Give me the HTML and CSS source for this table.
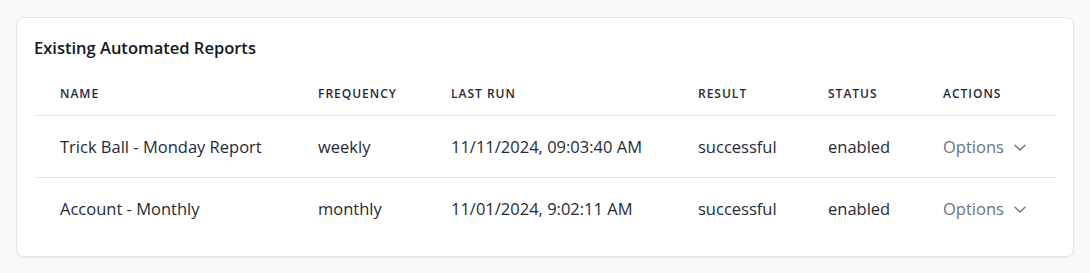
FILE: index.html
```html
<!DOCTYPE html>
<html lang="en">
<head>
<meta charset="UTF-8">
<meta name="viewport" content="width=device-width, initial-scale=1.0">
<title>Automated Reports</title>
<link rel="stylesheet" href="styles.css">
</head>
<body>

<div class="card">
  <h3 class="card-title">Existing Automated Reports</h3>

  <table class="reports">
    <thead>
      <tr>
        <th class="col-name">Name</th>
        <th class="col-freq">Frequency</th>
        <th class="col-run">Last Run</th>
        <th class="col-result">Result</th>
        <th class="col-status">Status</th>
        <th>Actions</th>
      </tr>
    </thead>
    <tbody>
      <tr>
        <td>Trick Ball - Monday Report</td>
        <td>weekly</td>
        <td>11/11/2024, 09:03:40 AM</td>
        <td>successful</td>
        <td>enabled</td>
        <td>
          <button class="options">Options
            <svg class="chevron" viewBox="0 0 16 16" width="16" height="16"><path d="M3 6.2 8 11l5-4.8" fill="none" stroke="currentColor" stroke-width="1.4" stroke-linecap="round" stroke-linejoin="round"/></svg>
          </button>
        </td>
      </tr>
      <tr>
        <td>Account - Monthly</td>
        <td>monthly</td>
        <td>11/01/2024, 9:02:11 AM</td>
        <td>successful</td>
        <td>enabled</td>
        <td>
          <button class="options">Options
            <svg class="chevron" viewBox="0 0 16 16" width="16" height="16"><path d="M3 6.2 8 11l5-4.8" fill="none" stroke="currentColor" stroke-width="1.4" stroke-linecap="round" stroke-linejoin="round"/></svg>
          </button>
        </td>
      </tr>
    </tbody>
  </table>
</div>

</body>
</html>
```

FILE: styles.css
```css
body {
    margin: 0;
    padding: 17px 16px;
    background-color: #f8f9fb;
    font-family: "Open Sans", "Noto Sans", sans-serif;
    color: #1f2937;
}
.card {
    background: #fff;
    border: 1px solid #e3e5e8;
    border-radius: 8px;
    box-shadow: 0 1px 2px rgba(0, 0, 0, 0.06);
    padding: 18px 17px 17px;
}
.card-title {
    margin: 0 0 13px;
    font-size: 16.5px;
    line-height: 24px;
    font-weight: 600;
    color: #111827;
}
.reports {
    width: 100%;
    border-collapse: collapse;
    table-layout: fixed;
}
.reports th,
.reports td {
    box-sizing: border-box;
}
.reports th {
    text-align: left;
    font-size: 12px;
    font-weight: 600;
    letter-spacing: 1px;
    text-transform: uppercase;
    line-height: 18px;
    padding: 12px 26px;
    border-bottom: 1px solid #e5e7eb;
    color: #1f2937;
}
.col-name { width: 258px; }
.col-freq { width: 133px; }
.col-run { width: 247px; }
.col-result { width: 130px; }
.col-status { width: 115px; }
.reports td {
    font-size: 16.5px;
    line-height: 21px;
    padding: 20px 26px 20px;
    color: #1f2937;
    white-space: nowrap;
}
.reports tbody tr + tr td {
    border-top: 1px solid #e5e7eb;
}
.options {
    background: none;
    border: none;
    padding: 0;
    font: inherit;
    color: #6b7280;
    cursor: pointer;
    display: inline-flex;
    align-items: center;
    gap: 8px;
}
.chevron {
    color: #6b7280;
}
```
